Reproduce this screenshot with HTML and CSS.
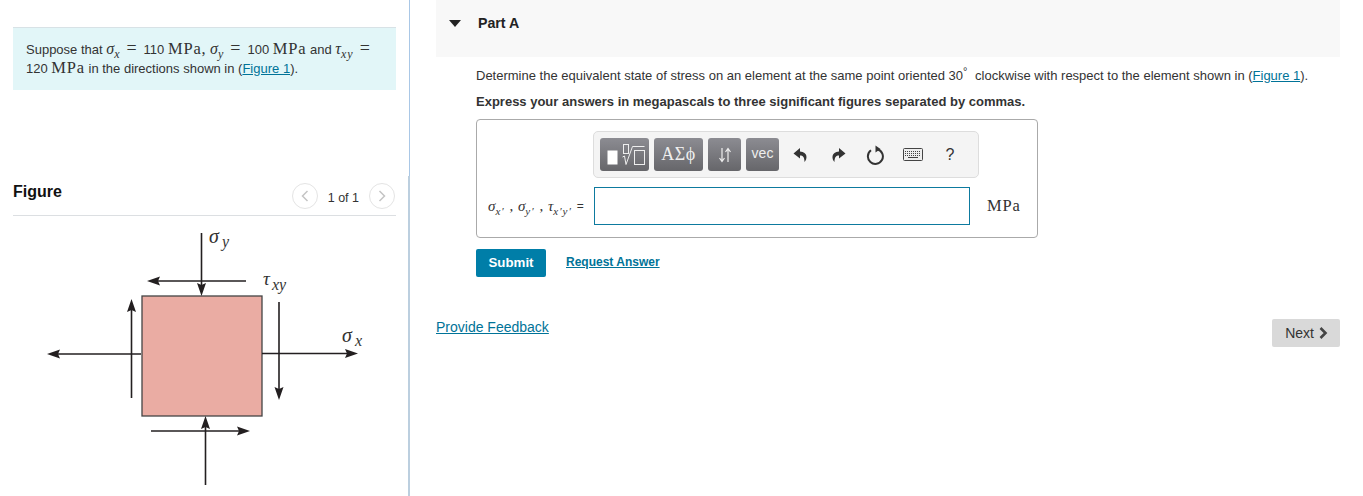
FILE: index.html
```html
<!DOCTYPE html>
<html lang="en">
<head>
    <meta charset="UTF-8">
    <meta name="viewport" content="width=device-width, initial-scale=1.0">
    <title>Part A</title>
    <link rel="stylesheet" href="styles.css">
</head>
<body>
    <div class="page">
        <div class="left">
            <div class="statement">
                Suppose that <span class="m"><i>&sigma;<sub>x</sub></i><span class="eq">=</span></span>110 <span class="m mpa">MPa,</span> <span class="m"><i>&sigma;<sub>y</sub></i><span class="eq">=</span></span>100 <span class="m mpa">MPa</span> and <span class="m"><i>&tau;<sub>xy</sub></i><span class="eq">=</span></span><br>
                120 <span class="m mpa">MPa</span> in the directions shown in (<a href="#">Figure 1</a>).
            </div>
            <div class="figure-head">
                <h2>Figure</h2>
                <div class="pager">
                    <span class="pager-btn">
                        <svg width="8" height="12" viewBox="0 0 8 12"><path d="M6.5 1 L1.5 6 L6.5 11" fill="none" stroke="#c4c4c4" stroke-width="1.5"/></svg>
                    </span>
                    <span class="pager-text">1 of 1</span>
                    <span class="pager-btn">
                        <svg width="8" height="12" viewBox="0 0 8 12"><path d="M1.5 1 L6.5 6 L1.5 11" fill="none" stroke="#c4c4c4" stroke-width="1.5"/></svg>
                    </span>
                </div>
            </div>
            <svg class="diagram" width="383" height="280" viewBox="13 216 383 280">
                <rect x="142" y="296" width="120" height="120" fill="#eaaca3" stroke="#444" stroke-width="1.3"/>
                <g stroke="#231f20" stroke-width="1.6" fill="none">
                    <path d="M201.5 233 V286"/>
                    <path d="M155 281 H246"/>
                    <path d="M279 302 V392"/>
                    <path d="M131.5 398 V308"/>
                    <path d="M151 431 H242"/>
                    <path d="M262 353.5 H350"/>
                    <path d="M55 354 H141"/>
                    <path d="M205.5 485 V426"/>
                </g>
                <g fill="#231f20">
                    <path d="M201.5 296 L197 283 L201.5 285 L206 283 Z"/>
                    <path d="M147 281 L160 276.5 L158 281 L160 285.5 Z"/>
                    <path d="M279 400 L274.5 387 L279 389 L283.5 387 Z"/>
                    <path d="M131.5 299 L127 312 L131.5 310 L136 312 Z"/>
                    <path d="M250 431 L237 426.5 L239 431 L237 435.5 Z"/>
                    <path d="M358 353.5 L345 349 L347 353.5 L345 358 Z"/>
                    <path d="M47 354 L60 349.5 L58 354 L60 358.5 Z"/>
                    <path d="M205.5 416 L201 429 L205.5 427 L210 429 Z"/>
                </g>
                <g class="diagram-label">
                    <text x="209" y="243" font-size="20">&sigma;</text>
                    <text x="222" y="247" font-size="16">y</text>
                    <text x="263" y="285" font-size="19">&tau;</text>
                    <text x="272" y="290" font-size="16">xy</text>
                    <text x="342" y="342" font-size="20">&sigma;</text>
                    <text x="355" y="346" font-size="16">x</text>
                </g>
            </svg>
        </div>
        <div class="right">
            <div class="part-head">
                <span class="caret"></span>
                <h3>Part A</h3>
            </div>
            <div class="part-body">
                <p class="question">Determine the equivalent state of stress on an element at the same point oriented 30<sup>&deg;</sup> clockwise with respect to the element shown in (<a href="#">Figure 1</a>).</p>
                <p class="instruction">Express your answers in megapascals to three significant figures separated by commas.</p>
                <div class="answer-box">
                    <div class="toolbar">
                        <span class="tool tool-templates">
                            <svg width="40" height="24" viewBox="0 0 40 24">
                                <rect x="2.5" y="7.5" width="10" height="14" fill="#fff"/>
                                <g fill="none" stroke="#eee" stroke-width="1">
                                    <rect x="18.5" y="1.5" width="5" height="9"/>
                                    <path d="M17.5 14 L19.5 13 L21 21.5 L27.5 3.5 H39.5"/>
                                    <rect x="29.5" y="7.5" width="10" height="14"/>
                                </g>
                            </svg>
                        </span>
                        <span class="tool tool-greek">&Alpha;&Sigma;&#981;</span>
                        <span class="tool tool-arrows">
                            <svg width="14" height="16" viewBox="0 0 14 16">
                                <g fill="none" stroke="#eee" stroke-width="1.2">
                                    <path d="M4 1 V14 M1.5 11 L4 14.5 L6.5 11"/>
                                    <path d="M10 15 V2 M7.5 5 L10 1.5 L12.5 5"/>
                                </g>
                            </svg>
                        </span>
                        <span class="tool tool-vec">vec</span>
                        <span class="tool-icon tool-undo">
                            <svg width="16" height="16" viewBox="0 0 16 16"><path d="M7 1 L0.5 6.5 L7 11.5 V8.5 C10 8.5 11.5 10 11.5 15 C14.5 12 15 5 7 4.5 Z" fill="#333"/></svg>
                        </span>
                        <span class="tool-icon">
                            <svg width="16" height="16" viewBox="0 0 16 16"><path d="M9 1 L15.5 6.5 L9 11.5 V8.5 C6 8.5 4.5 10 4.5 15 C1.5 12 1 5 9 4.5 Z" fill="#333"/></svg>
                        </span>
                        <span class="tool-icon">
                            <svg width="20" height="20" viewBox="0 0 20 20"><path d="M12.5 4.2 A7.5 7.5 0 1 1 6 5.3" fill="none" stroke="#333" stroke-width="2"/><path d="M10.5 0.5 L15.5 4 L10.5 7.5 Z" fill="#333"/></svg>
                        </span>
                        <span class="tool-icon">
                            <svg width="20" height="13" viewBox="0 0 20 13">
                                <rect x="0.5" y="0.5" width="19" height="12" rx="1" fill="#eee" stroke="#444"/>
                                <path d="M2 3.5 H18 M2 5.5 H18 M2 7.5 H18" stroke="#444" stroke-width="1" stroke-dasharray="1 1"/>
                                <path d="M5 9.5 H15" stroke="#444" stroke-width="1"/>
                            </svg>
                        </span>
                        <span class="tool-icon tool-help">?</span>
                    </div>
                    <div class="answer-row">
                        <label class="answer-label"><span class="m"><i>&sigma;<sub>x&prime;</sub></i> , <i>&sigma;<sub>y&prime;</sub></i> , <i>&tau;<sub>x&prime;y&prime;</sub></i></span><span class="answer-eq">=</span></label>
                        <input class="answer-input" type="text">
                        <span class="answer-unit mpa">MPa</span>
                    </div>
                </div>
                <div class="actions">
                    <button class="submit">Submit</button>
                    <a class="request" href="#">Request Answer</a>
                </div>
            </div>
            <div class="foot">
                <a class="feedback" href="#">Provide Feedback</a>
                <button class="next">Next <svg width="9" height="12" viewBox="0 0 9 12"><path d="M1.5 1 L6.5 6 L1.5 11" fill="none" stroke="#444" stroke-width="2.6"/></svg></button>
            </div>
        </div>
    </div>
</body>
</html>
```

FILE: styles.css
```css
body {
    margin: 0;
    font-family: "Liberation Sans", Arial, sans-serif;
    font-size: 13px;
    color: #333;
    background: #fff;
    overflow: hidden;
}
a {
    color: #007398;
}
.page {
    display: flex;
    height: 496px;
}
.m {
    font-family: "Liberation Serif", serif;
    font-size: 16px;
    line-height: 1;
}
.m sub {
    font-size: 12px;
    letter-spacing: 1px;
    line-height: 0;
}
.mpa {
    font-family: "Liberation Serif", serif;
    font-size: 16.5px;
    letter-spacing: 0.8px;
    line-height: 1;
}
.eq {
    font-size: 18px;
    margin: 0 7px 0 6px;
}

/* left column */
.left {
    width: 383px;
    margin-left: 13px;
    padding-top: 27px;
    position: relative;
}
.left::before {
    content: "";
    position: absolute;
    top: 0;
    bottom: 0;
    left: 396px;
    width: 1px;
    background: #a9c7e6;
}
.left::after {
    content: "";
    position: absolute;
    top: 176px;
    bottom: 0;
    left: 395px;
    width: 2px;
    background: #bccfdf;
}
.statement {
    height: 63px;
    box-sizing: border-box;
    padding: 11px 13px 0;
    line-height: 19px;
    white-space: nowrap;
    background: #e2f6f8;
    border-top: 1px solid #d8e2e6;
}
.figure-head {
    display: flex;
    justify-content: space-between;
    align-items: center;
    height: 37px;
    margin-top: 89px;
    border-bottom: 1px solid #dcdfe2;
    box-sizing: border-box;
    padding-bottom: 2px;
}
.figure-head h2 {
    margin: 0 0 8px;
    font-size: 16px;
    color: #111;
}
.pager {
    display: flex;
    align-items: center;
    gap: 10px;
    margin-right: 1px;
}
.pager-btn {
    width: 26px;
    height: 26px;
    box-sizing: border-box;
    border: 1px solid #e4e4e4;
    border-radius: 50%;
    display: flex;
    align-items: center;
    justify-content: center;
}
.pager-text {
    font-size: 12.5px;
    margin-top: 3px;
}
.diagram {
    display: block;
}
.diagram-label {
    font-family: "Liberation Serif", serif;
    font-style: italic;
    fill: #333;
}

/* right column */
.right {
    width: 904px;
    margin-left: 40px;
}
.part-head {
    display: flex;
    align-items: center;
    height: 57px;
    padding-left: 13px;
    background: #f8f8f8;
    box-sizing: border-box;
    padding-bottom: 11px;
}
.part-head h3 {
    margin: 0 0 0 17px;
    font-size: 14.2px;
    color: #222;
}
.caret {
    width: 0;
    height: 0;
    border-left: 6px solid transparent;
    border-right: 6px solid transparent;
    border-top: 7px solid #222;
}
.part-body {
    padding-left: 40px;
}
.question {
    margin: 11px 0 0;
    line-height: 16px;
    font-size: 13px;
}
.question sup {
    font-size: 11px;
    line-height: 0;
    margin-right: 4px;
}
.instruction {
    margin: 10px 0 0;
    line-height: 16px;
    font-size: 13px;
    font-weight: bold;
}
.answer-box {
    width: 562px;
    height: 119px;
    margin-top: 9px;
    box-sizing: border-box;
    border: 1px solid #aaa;
    border-radius: 4px;
    padding-top: 11px;
}
.toolbar {
    display: flex;
    align-items: center;
    width: 386px;
    height: 47px;
    margin-left: 116px;
    box-sizing: border-box;
    padding-left: 6px;
    background: #f4f4f4;
    border: 1px solid #ddd;
    border-radius: 5px;
}
.tool {
    display: flex;
    align-items: center;
    justify-content: center;
    height: 33px;
    margin-right: 5px;
    box-sizing: border-box;
    color: #eee;
    background: linear-gradient(#8c8c92, #66666a);
    border-radius: 3px;
}
.tool-templates {
    width: 49px;
}
.tool-greek {
    width: 49px;
    font-family: "Liberation Serif", serif;
    font-size: 18px;
    letter-spacing: 0.5px;
}
.tool-arrows {
    width: 33px;
}
.tool-vec {
    width: 33px;
    font-size: 14px;
    padding-bottom: 4px;
}
.tool-icon {
    display: flex;
    align-items: center;
    justify-content: center;
    width: 37.3px;
    font-size: 16px;
    color: #333;
}
.tool-undo {
    margin-left: -2px;
}
.answer-row {
    display: flex;
    align-items: center;
    margin-top: 9px;
}
.answer-label {
    display: flex;
    align-items: center;
    width: 117px;
    box-sizing: border-box;
    padding-left: 11px;
    white-space: nowrap;
}
.answer-label .m {
    font-size: 15px;
    word-spacing: 1px;
}
.answer-label sub {
    font-size: 11px;
    letter-spacing: 1px;
}
.answer-eq {
    margin-left: 5px;
    font-size: 12px;
}
.answer-input {
    width: 376px;
    height: 38px;
    box-sizing: border-box;
    border: 1px solid #0d7a9f;
    padding: 0;
    background: #fff;
}
.answer-unit {
    margin-left: 17px;
}
.actions {
    display: flex;
    align-items: center;
    margin-top: 11px;
}
.submit {
    width: 70px;
    height: 28px;
    padding: 0 0 2px;
    border: none;
    border-radius: 2px;
    background: #007ea8;
    color: #fff;
    font-family: inherit;
    font-size: 13.3px;
    font-weight: bold;
}
.request {
    margin-left: 20px;
    margin-bottom: 2px;
    font-size: 12px;
    font-weight: bold;
}
.foot {
    display: flex;
    justify-content: space-between;
    align-items: flex-start;
    margin-top: 42px;
}
.feedback {
    font-size: 14px;
    line-height: 16px;
}
.next {
    display: flex;
    align-items: center;
    gap: 5px;
    height: 28px;
    padding: 0 12px 0 13px;
    border: none;
    border-radius: 2px;
    background: #d9d9d9;
    color: #333;
    font-family: inherit;
    font-size: 14px;
}
```
